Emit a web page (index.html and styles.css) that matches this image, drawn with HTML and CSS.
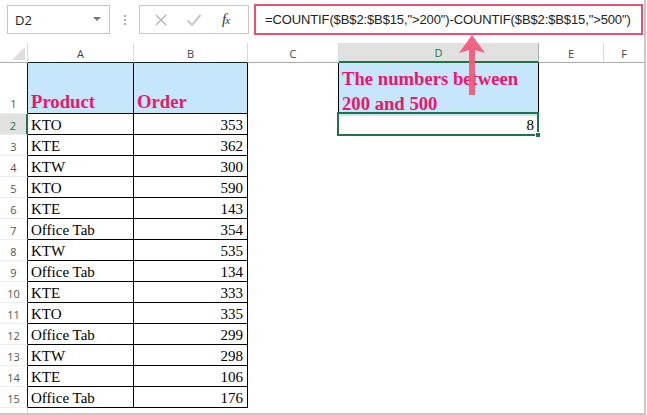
FILE: index.html
```html
<!DOCTYPE html>
<html>
<head>
<meta charset="utf-8">
<link rel="stylesheet" href="styles.css">
</head>
<body>
<div class="app">
  <div class="fbar">
    <div class="namebox"><span class="nbtext">D2</span><span class="caret"></span></div>
    <div class="grip"><i></i><i></i><i></i></div>
    <div class="fbtns">
      <svg class="ico" width="14" height="14" viewBox="0 0 14 14"><path d="M2 2 L12 12 M12 2 L2 12" stroke="#b4b4b4" stroke-width="1.4" fill="none"/></svg>
      <svg class="ico" width="16" height="14" viewBox="0 0 16 14"><path d="M1.5 7.5 L6 12 L14.5 2" stroke="#c8c8c8" stroke-width="2" fill="none"/></svg>
      <span class="fx">f<span class="fxx">x</span></span>
    </div>
    <div class="formula">=COUNTIF($B$2:$B$15,"&gt;200")-COUNTIF($B$2:$B$15,"&gt;500")</div>
  </div>
  <div class="sheet">
    <div class="row colhdr">
      <div class="corner"><span class="tri"></span></div>
      <div class="ch tbl">A</div>
      <div class="ch tbl">B</div>
      <div class="ch">C</div>
      <div class="ch selc">D</div>
      <div class="ch">E</div>
      <div class="ch last">F</div>
    </div>
    <div class="row r1">
      <div class="rh">1</div>
      <div class="c t blue head">Product</div>
      <div class="c t blue head">Order</div>
      <div class="c dl"></div>
      <div class="c t blue head wrap">The numbers between 200 and 500</div>
      <div class="c"></div>
      <div class="c"></div>
    </div>
    <div class="row">
      <div class="rh selr">2</div>
      <div class="c t">KTO</div>
      <div class="c t num">353</div>
      <div class="c"></div>
      <div class="c num dsel">8<span class="sel"><span class="handle"></span></span></div>
      <div class="c"></div>
      <div class="c"></div>
    </div>
    <div class="row"><div class="rh">3</div><div class="c t">KTE</div><div class="c t num">362</div><div class="c"></div><div class="c"></div><div class="c"></div><div class="c"></div></div>
    <div class="row"><div class="rh">4</div><div class="c t">KTW</div><div class="c t num">300</div><div class="c"></div><div class="c"></div><div class="c"></div><div class="c"></div></div>
    <div class="row"><div class="rh">5</div><div class="c t">KTO</div><div class="c t num">590</div><div class="c"></div><div class="c"></div><div class="c"></div><div class="c"></div></div>
    <div class="row"><div class="rh">6</div><div class="c t">KTE</div><div class="c t num">143</div><div class="c"></div><div class="c"></div><div class="c"></div><div class="c"></div></div>
    <div class="row"><div class="rh">7</div><div class="c t">Office Tab</div><div class="c t num">354</div><div class="c"></div><div class="c"></div><div class="c"></div><div class="c"></div></div>
    <div class="row"><div class="rh">8</div><div class="c t">KTW</div><div class="c t num">535</div><div class="c"></div><div class="c"></div><div class="c"></div><div class="c"></div></div>
    <div class="row"><div class="rh">9</div><div class="c t">Office Tab</div><div class="c t num">134</div><div class="c"></div><div class="c"></div><div class="c"></div><div class="c"></div></div>
    <div class="row"><div class="rh">10</div><div class="c t">KTE</div><div class="c t num">333</div><div class="c"></div><div class="c"></div><div class="c"></div><div class="c"></div></div>
    <div class="row"><div class="rh">11</div><div class="c t">KTO</div><div class="c t num">335</div><div class="c"></div><div class="c"></div><div class="c"></div><div class="c"></div></div>
    <div class="row"><div class="rh">12</div><div class="c t">Office Tab</div><div class="c t num">299</div><div class="c"></div><div class="c"></div><div class="c"></div><div class="c"></div></div>
    <div class="row"><div class="rh">13</div><div class="c t">KTW</div><div class="c t num">298</div><div class="c"></div><div class="c"></div><div class="c"></div><div class="c"></div></div>
    <div class="row"><div class="rh">14</div><div class="c t">KTE</div><div class="c t num">106</div><div class="c"></div><div class="c"></div><div class="c"></div><div class="c"></div></div>
    <div class="row"><div class="rh">15</div><div class="c t">Office Tab</div><div class="c t num">176</div><div class="c"></div><div class="c"></div><div class="c"></div><div class="c"></div></div>
    <div class="row filler"><div class="rh"></div></div>
  </div>
  <svg class="arrow" width="32" height="64" viewBox="0 0 32 64">
    <path d="M16 0 L29 18 L19 15 L19 60 L13 60 L13 15 L3 18 Z" fill="#f2587a" fill-opacity="0.92"/>
  </svg>
</div>
</body>
</html>
```

FILE: styles.css
```css
* { box-sizing: border-box; }
html, body { margin: 0; padding: 0; background: #fff; }
.app {
  position: relative;
  width: 646px;
  height: 415px;
  border-right: 2px solid #c8c8c8;
  border-bottom: 2px solid #c8c8c8;
  overflow: hidden;
}
.fbar {
  height: 43px;
  display: flex;
  align-items: flex-start;
  padding-top: 4px;
}
.namebox {
  margin-left: 7px;
  margin-top: 1px;
  width: 103px;
  height: 29px;
  border: 1px solid #c6c6c6;
  display: flex;
  align-items: center;
  justify-content: space-between;
  padding: 0 8px 0 7px;
  font-family: "Open Sans", "Liberation Sans", sans-serif;
  font-size: 13px;
  color: #222;
}
.caret {
  width: 0; height: 0;
  border-left: 4px solid transparent;
  border-right: 4px solid transparent;
  border-top: 4px solid #777;
  margin-top: -2px;
}
.grip {
  width: 29px;
  height: 29px;
  margin-top: 1px;
  display: flex;
  flex-direction: column;
  align-items: center;
  justify-content: center;
  gap: 2px;
}
.grip i { display: block; width: 2px; height: 2px; background: #aaa; }
.fbtns {
  width: 110px;
  height: 29px;
  margin-top: 1px;
  border: 1px solid #c6c6c6;
  display: flex;
  align-items: center;
  padding: 0 0 0 14px;
  gap: 0;
}
.fbtns .ico:first-child { margin-right: 18px; }
.fbtns .ico:nth-child(2) { margin-right: 20px; }
.fx {
  font-family: "Liberation Serif", serif;
  font-style: italic;
  font-size: 15px;
  color: #333;
  letter-spacing: -1px;
}
.fxx { font-size: 11px; }
.formula {
  margin-left: 5px;
  width: 389px;
  height: 31px;
  border: 2px solid #ec4f72;
  display: flex;
  align-items: center;
  padding-left: 9px;
  font-family: "Liberation Sans", sans-serif;
  font-size: 13px;
  letter-spacing: -0.12px;
  color: #222;
  white-space: nowrap;
  overflow: hidden;
}
.sheet { display: flex; flex-direction: column; }
.row {
  display: grid;
  grid-template-columns: 28px 106px 114px 91px 200px 65px 1fr;
  height: 21px;
}
.row > div { border-right: 1px solid transparent; border-bottom: 1px solid transparent; }
.colhdr { height: 20px; }
.r1 { height: 51px; }
.filler { height: 6px; }
.corner {
  position: relative;
  border-right: 1px solid #dadada !important;
  border-bottom: 1px solid #ababab !important;
}
.tri {
  position: absolute;
  right: 2px; bottom: 2px;
  width: 0; height: 0;
  border-left: 13px solid transparent;
  border-bottom: 13px solid #dfdfdf;
}
.ch {
  border-right: 1px solid #dadada !important;
  border-bottom: 1px solid #ababab !important;
  font-family: "Open Sans", "Liberation Sans", sans-serif;
  font-size: 11px;
  color: #444;
  display: flex;
  align-items: center;
  justify-content: center;
  padding-top: 1px;
}
.ch.tbl { border-bottom-color: #222 !important; }
.ch.selc {
  background: #e1e1e1;
  color: #217346;
  border-bottom: 2px solid #217346 !important;
  border-right-color: #ababab !important;
}
.ch.last { border-right: none !important; }
.rh {
  border-right: 1px solid #111 !important;
  border-bottom: 1px solid #ededed !important;
  font-family: "Open Sans", "Liberation Sans", sans-serif;
  font-size: 11px;
  color: #555;
  display: flex;
  align-items: center;
  justify-content: center;
  padding-top: 2px;
}
.r1 .rh { align-items: flex-end; padding-bottom: 2px; }
.rh.selr {
  background: #e1e1e1;
  color: #217346;
  border-right: 2px solid #217346 !important;
}
.filler .rh { border-right-color: #dadada !important; border-bottom: none !important; }
.c {
  font-family: "Liberation Serif", serif;
  font-size: 15px;
  color: #000;
  display: flex;
  align-items: flex-end;
  padding: 0 4px 0 3px;
  white-space: nowrap;
}
.c.t { border-right-color: #000; border-bottom-color: #000; }
.c.num { justify-content: flex-end; }
.c.blue { background: #c5e6fb; }
.c.head {
  font-weight: bold;
  font-size: 18.67px;
  color: #f0146c;
  padding-bottom: 0;
}
.c.dl { border-right-color: #000; }
.c.wrap {
  white-space: normal;
  line-height: 25px;
  padding-bottom: 0;
  margin-bottom: -2px;
  padding-left: 3px;
  border-bottom: none;
}
.dsel { position: relative; padding-right: 4px; }
.sel {
  position: absolute;
  left: -2px; top: -2px; right: -1px; bottom: -2px;
  border: 2px solid #217346;
}
.handle {
  position: absolute;
  right: -4px; bottom: -4px;
  width: 6px; height: 6px;
  background: #217346;
  border: 1px solid #fff;
}
.arrow {
  position: absolute;
  left: 456px;
  top: 35px;
}
```
